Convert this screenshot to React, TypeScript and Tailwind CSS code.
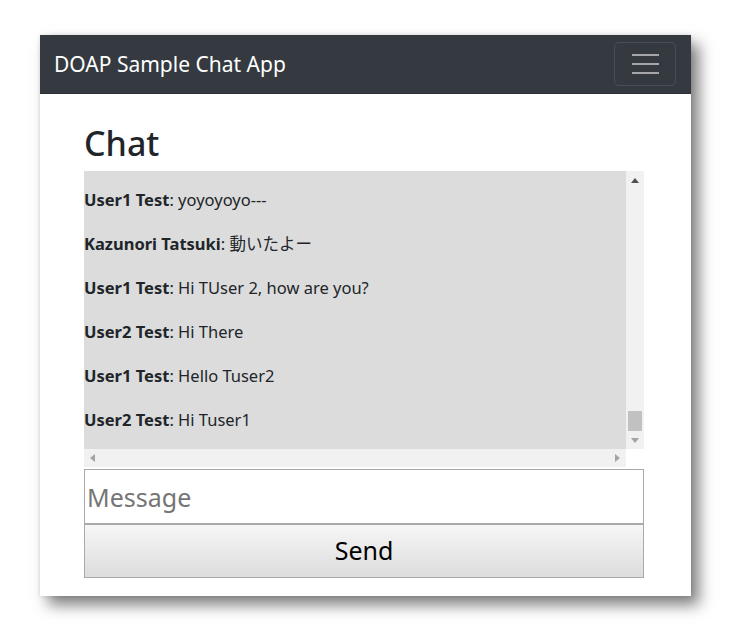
import React from "react";

const messages = [
  { name: "User1 Test", text: "yoyoyoyo---" },
  { name: "Kazunori Tatsuki", text: "動いたよー" },
  { name: "User1 Test", text: "Hi TUser 2, how are you?" },
  { name: "User2 Test", text: "Hi There" },
  { name: "User1 Test", text: "Hello Tuser2" },
  { name: "User2 Test", text: "Hi Tuser1" },
];

function Arrow({ dir, color }: { dir: "up" | "down" | "left" | "right"; color: string }) {
  const points = {
    up: "0,5 4,0 8,5",
    down: "0,0 8,0 4,5",
    left: "5,0 5,8 0,4",
    right: "0,0 0,8 5,4",
  }[dir];
  const vertical = dir === "up" || dir === "down";
  return (
    <svg width={vertical ? 8 : 5} height={vertical ? 5 : 8} viewBox={vertical ? "0 0 8 5" : "0 0 5 8"}>
      <polygon points={points} fill={color} />
    </svg>
  );
}

export default function App() {
  return (
    <div
      className="min-h-screen bg-white pt-[35px] pl-[40px] text-[#212529]"
      style={{ fontFamily: '"Noto Sans", "Noto Sans CJK JP", sans-serif' }}
    >
      <div className="w-[651px] h-[561px] bg-white shadow-[8px_9px_14px_rgba(0,0,0,0.5),0_0_4px_rgba(0,0,0,0.12)]">
        <nav className="h-[59px] bg-[#343a40] border-b border-[#2b3035] flex items-center justify-between pl-[14px] pr-[15px]">
          <span className="text-[21px] text-white leading-none">DOAP Sample Chat App</span>
          <button className="w-[62px] h-[44px] rounded-[5px] border border-white/10 flex flex-col items-center justify-center gap-[7px]">
            <span className="block w-[27px] h-[2px] bg-[#a4a6a8]" />
            <span className="block w-[27px] h-[2px] bg-[#a4a6a8]" />
            <span className="block w-[27px] h-[2px] bg-[#a4a6a8]" />
          </button>
        </nav>

        <div className="px-[44px]">
          <h1 className="mt-[28px] mb-[7px] text-[34px] leading-[42px] font-medium text-[#212529]">Chat</h1>

          <div className="grid grid-cols-[542px_18px] grid-rows-[278px_18px]">
            <div className="bg-[#dcdcdc] overflow-hidden pt-[17px]">
              {messages.map((m, i) => (
                <p key={i} className="text-[16.5px] leading-[24px] mb-[20px] whitespace-nowrap">
                  <b className="font-bold">{m.name}</b>: {m.text}
                </p>
              ))}
            </div>
            <div className="bg-[#f1f1f1] flex flex-col">
              <div className="h-[18px] flex items-center justify-center">
                <Arrow dir="up" color="#505050" />
              </div>
              <div className="flex-1 flex flex-col justify-end items-center">
                <div className="w-[14px] h-[20px] bg-[#c1c1c1]" />
              </div>
              <div className="h-[18px] flex items-center justify-center">
                <Arrow dir="down" color="#a3a3a3" />
              </div>
            </div>
            <div className="bg-[#f1f1f1] flex items-center justify-between px-[6px]">
              <Arrow dir="left" color="#a3a3a3" />
              <Arrow dir="right" color="#a3a3a3" />
            </div>
            <div className="bg-white" />
          </div>

          <input
            className="mt-[2px] block w-[560px] h-[55px] border border-[#a9a9a9] px-[2px] text-[25px] text-[#212529] placeholder:text-[#757575] outline-none"
            placeholder="Message"
          />
          <button className="block w-[560px] h-[54px] border border-[#a9a9a9] bg-gradient-to-b from-[#f6f6f6] to-[#dddddd] text-[25px] text-black">
            Send
          </button>
        </div>
      </div>
    </div>
  );
}
